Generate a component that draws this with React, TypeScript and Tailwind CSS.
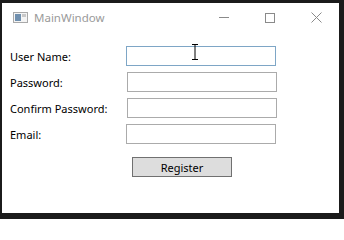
import React from 'react';

const fields = [
  { label: 'User Name:', focused: true, shift: false },
  { label: 'Password:', focused: false, shift: true },
  { label: 'Confirm Password:', focused: false, shift: true },
  { label: 'Email:', focused: false, shift: false },
];

function AppIcon() {
  return (
    <svg width="15" height="11" viewBox="0 0 15 11" className="shrink-0">
      <rect x="0.5" y="0.5" width="14" height="10" fill="#f4f4f4" stroke="#a9a9a9" />
      <rect x="2" y="2" width="6" height="7" fill="#6f8fae" />
      <rect x="9" y="2" width="4" height="3" fill="#c8c8c8" />
    </svg>
  );
}

export default function App() {
  return (
    <div className="w-[344px] h-[219px] bg-[#1b1b1b] pt-[3px] pl-[2px] pr-[5px] pb-[6px] font-['Noto_Sans',sans-serif]">
      <div className="relative w-full h-full bg-white flex flex-col">
        {/* title bar */}
        <div className="h-[29px] flex items-center pl-[11px] shrink-0">
          <AppIcon />
          <span className="ml-[6px] text-[11.5px] text-[#9a9a9a] leading-none">MainWindow</span>
          <div className="ml-auto flex items-center h-full">
            <div className="w-[46px] h-full flex items-center justify-center">
              <div className="w-[10px] h-px bg-[#8a8a8a]" />
            </div>
            <div className="w-[46px] h-full flex items-center justify-center">
              <div className="w-[10px] h-[10px] border border-[#8a8a8a]" />
            </div>
            <div className="w-[46px] h-full flex items-center justify-center">
              <svg width="11" height="11" viewBox="0 0 11 11">
                <path d="M0.5 0.5 L10.5 10.5 M10.5 0.5 L0.5 10.5" stroke="#8a8a8a" strokeWidth="1" />
              </svg>
            </div>
          </div>
        </div>

        {/* form */}
        <div className="flex flex-col gap-[6px] pt-[14px] pl-[8px]">
          {fields.map((f) => (
            <div key={f.label} className="flex items-center h-[20px]">
              <span className="w-[116px] text-[11px] text-black leading-none">{f.label}</span>
              <div
                className={
                  (f.focused ? 'border-[#7ea6c6]' : 'border-[#ababab]') +
                  (f.shift ? ' ml-px' : '') +
                  ' w-[150px] h-[20px] border'
                }
              />
            </div>
          ))}
        </div>

        <div className="flex pt-[13px] pl-[130px]">
          <button className="w-[100px] h-[20px] bg-[#dddddd] border border-[#707070] text-[11px] text-black leading-none">
            Register
          </button>
        </div>

        {/* mouse cursor */}
        <svg className="absolute left-[189px] top-[41px]" width="8" height="16" viewBox="0 0 8 16">
          <path d="M1 0.5 H7 M1 15.5 H7 M4 0.5 V15.5" stroke="#000" strokeWidth="1" fill="none" />
        </svg>
      </div>
    </div>
  );
}
